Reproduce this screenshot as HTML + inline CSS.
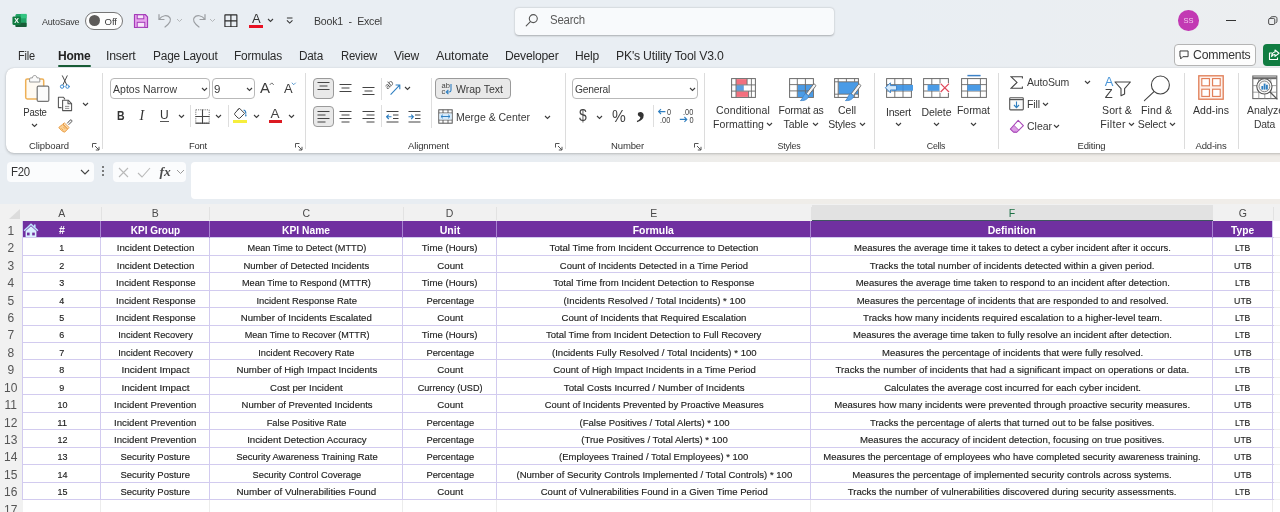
<!DOCTYPE html>
<html lang="en">
<head>
<meta charset="utf-8">
<title>Book1 - Excel</title>
<style>
*{box-sizing:border-box}
html,body{margin:0;padding:0}
body{width:1280px;height:512px;overflow:hidden;position:relative;background:#e9eef3;font-family:"Liberation Sans",sans-serif;color:#3b3b3b;font-size:12px}
.abs,#sheet div,#sheet svg,#chrome div,#chrome svg,#chrome span{position:absolute}
#chrome span.i{position:static}
#chrome{will-change:transform;position:absolute;left:0;top:0;width:1280px;height:204px;background:linear-gradient(90deg,#e9eef3 0%,#e9eef3 70%,#eceef0 100%)}
.t{white-space:nowrap;line-height:14px;height:14px;color:#3a3a3a}
.tab{font-size:12.5px;top:49px;color:#2b2b2b;line-height:15px;white-space:nowrap}
.gl{font-size:9.5px;color:#333;top:140px;line-height:12px;white-space:nowrap;transform:translateX(-50%)}
.lbl{font-size:10.5px;color:#333;line-height:14px;white-space:nowrap;transform:translateX(-50%)}
.sep{width:1px;background:#dcdcdc;top:73px;height:76px}
.msep{width:1px;background:#dedede;height:22px}
.box{border:1px solid #b9b9b9;border-radius:4px;background:#fff}
.hbtn{border:1px solid #9a9a9a;border-radius:4px;background:#e9e9e9}
#ribbon{left:6px;top:68px;width:1290px;height:85px;background:#fff;border-radius:8px;box-shadow:0 1px 3px rgba(0,0,0,.22),0 0 1px rgba(0,0,0,.15)}
/* sheet */
#sheet{will-change:transform;position:absolute;left:0;top:204px;width:1280px;height:308px;background:linear-gradient(90deg,#e8edf2 0%,#e8edf2 42%,#efede9 58%,#f0ede9 100%);overflow:hidden}
#sheet>div,#sheet>svg{margin-top:-204px}
.chbg{left:0;top:204.4px;width:1280px;height:17px;background:#f1f1f1}
.rhbg{left:0;top:204.4px;width:22.5px;height:308px;background:#f1f1f1}
.corner{left:9px;top:209px;width:0;height:0;border-left:11px solid transparent;border-bottom:10px solid #dcdcdc}
.selcol{top:204.5px;height:16.6px;background:#e2e2e2;border-bottom:1.8px solid #3f5560}
.cl{width:40px;text-align:center;top:206px;font-size:10.5px;line-height:14px;color:#4a4a4a}
.cl.sel{color:#1f7145}
.chsep{top:207px;width:1px;height:13px;background:#e2e2e2}
.rn{left:0;width:21.5px;text-align:center;font-size:12px;line-height:21.4px;color:#555;height:17.4px;overflow:visible}
.cells{left:22.5px;top:221px;width:1260px;height:300px;background:#fff}
.gv{width:1px;background:#ececec}
.gh{height:1px;background:#efefef}
.ph{background:#7030a0}
.hc{height:17.4px;line-height:19.2px;text-align:center;color:#fff;font-weight:bold;font-size:10.3px;letter-spacing:0px;white-space:nowrap}
.home{}
.c{height:17.4px;line-height:20.2px;text-align:center;padding-left:.8px;font-size:9.9px;color:#1c1c1c;-webkit-text-stroke:0.15px #1c1c1c;white-space:nowrap;overflow:visible}
.ca{font-size:9.9px!important}
.cs{display:inline-block;position:static!important}
.lh{left:22px;width:1251.5px;height:1px;background:#d2cbef}
.lv{top:221px;width:1px;height:278px;background:#d2cbef}
.lvh{top:221.1px;width:1px;height:17.1px;background:#a883d2}
</style>
</head>
<body>
<div id="chrome">
<!-- ===== title bar ===== -->
<svg style="left:12.3px;top:13.2px" width="15" height="15" viewBox="0 0 17 17"><rect x="4" y="1" width="12.5" height="15" rx="1.5" fill="#21a366"/><rect x="10" y="1" width="6.5" height="5" fill="#33c481"/><rect x="4" y="6" width="6" height="5" fill="#107c41"/><rect x="4" y="11" width="12.5" height="5" rx="1" fill="#185c37"/><rect x="0.5" y="4" width="9.5" height="9.5" rx="1.2" fill="#107c41"/><text x="5.25" y="11.6" font-family="Liberation Sans,sans-serif" font-size="8" font-weight="bold" fill="#fff" text-anchor="middle">X</text></svg>
<div class="t" style="left:42px;top:14.6px;font-size:9.6px;letter-spacing:-0.22px;transform:scaleX(0.9385);transform-origin:0 50%">AutoSave</div>
<div style="left:85px;top:11.5px;width:37.5px;height:18px;border:1px solid #767676;border-radius:9px;background:#fdfdfd"></div>
<div style="left:88.5px;top:15px;width:11px;height:11px;border-radius:50%;background:#5d5b59"></div>
<div class="t" style="left:104.5px;top:14.6px;font-size:9.6px;letter-spacing:-0.075px">Off</div>
<!-- save -->
<svg style="left:133px;top:12.5px" width="16" height="16" viewBox="0 0 16 16"><path d="M1.5 1.5 H12.2 L14.5 3.8 V14.5 H1.5 Z" fill="#e8a6ee" stroke="#a33bb8" stroke-width="1.2" stroke-linejoin="round"/><rect x="4.2" y="1.8" width="6.6" height="4" fill="#f7e6f9" stroke="#a33bb8" stroke-width="1"/><rect x="4.2" y="9.3" width="7.6" height="5" fill="#f7e6f9" stroke="#a33bb8" stroke-width="1"/></svg>
<!-- undo -->
<svg style="left:157px;top:12px" width="17" height="17" viewBox="0 0 17 17" fill="none" stroke="#9b9ea2" stroke-width="1.2" stroke-linecap="round" stroke-linejoin="round"><path d="M2 2.5 V7.5 H7"/><path d="M2.3 7.2 C5 3.2 10.5 2.6 12.8 5.6 C15 8.6 12.5 11.5 8 15"/></svg>
<svg style="left:176px;top:18px" width="7" height="5" viewBox="0 0 7 5" fill="none" stroke="#b5b8bb" stroke-width="1"><path d="M1 1 L3.5 3.5 L6 1"/></svg>
<!-- redo -->
<svg style="left:190px;top:12px" width="17" height="17" viewBox="0 0 17 17" fill="none" stroke="#9b9ea2" stroke-width="1.2" stroke-linecap="round" stroke-linejoin="round"><path d="M15 2.5 V7.5 H10"/><path d="M14.7 7.2 C12 3.2 6.5 2.6 4.2 5.6 C2 8.6 4.5 11.5 9 15"/></svg>
<svg style="left:209px;top:18px" width="7" height="5" viewBox="0 0 7 5" fill="none" stroke="#b5b8bb" stroke-width="1"><path d="M1 1 L3.5 3.5 L6 1"/></svg>
<!-- borders -->
<svg style="left:224.4px;top:13.7px" width="13.8" height="13.8" viewBox="0 0 15 15" fill="none" stroke="#2b2b2b" stroke-width="1.25"><rect x="1" y="1" width="13" height="13" rx="0.3"/><path d="M7.5 1 V14 M1 7.5 H14"/></svg>
<!-- font color A -->
<div class="t" style="left:251.9px;top:10.6px;font-size:13px;line-height:16px;height:16px;color:#333">A</div>
<div style="left:249px;top:24.5px;width:14px;height:3.5px;background:#e81123"></div>
<svg style="left:267px;top:18px" width="7" height="5" viewBox="0 0 7 5" fill="none" stroke="#3d3d3d" stroke-width="1.1"><path d="M1 1 L3.5 3.5 L6 1"/></svg>
<!-- overflow -->
<svg style="left:285.5px;top:17.2px" width="7.4" height="7.4" viewBox="0 0 8 8" fill="none" stroke="#333" stroke-width="1.1"><path d="M1 1 H7 M1 3.6 L4 6.6 L7 3.6"/></svg>
<div class="t" style="left:314px;top:13.9px;font-size:10.8px;letter-spacing:-0.22px;transform:scaleX(0.9809);transform-origin:0 50%">Book1&nbsp; -&nbsp; Excel</div>
<!-- search -->
<div style="left:515px;top:7.5px;width:319px;height:27px;background:#f8fafc;border-radius:4px;box-shadow:0 0.5px 2px rgba(0,0,0,.28)"></div>
<svg style="left:525px;top:13px" width="14" height="14" viewBox="0 0 14 14" fill="none" stroke="#555" stroke-width="1.1" stroke-linecap="round"><circle cx="8.3" cy="5.6" r="4"/><path d="M5.4 8.6 L1.2 12.8"/></svg>
<div class="t" style="left:550px;top:13px;font-size:12px;color:#5a5a5a;letter-spacing:-0.22px;transform:scaleX(0.9534);transform-origin:0 50%">Search</div>
<!-- avatar -->
<div style="left:1178.3px;top:10.4px;width:20.6px;height:20.6px;border-radius:50%;background:#c239b3"></div>
<div class="t" style="left:1178.5px;top:15px;width:20px;text-align:center;font-size:7.5px;color:#f3c9ee;line-height:12px">SS</div>
<div style="left:1225.5px;top:19.5px;width:10px;height:1.2px;background:#333"></div>
<svg style="left:1267.5px;top:15.8px" width="11" height="9.5" viewBox="0 0 14 12" fill="none" stroke="#333" stroke-width="1.1"><rect x="0.8" y="3" width="7.8" height="7.8" rx="1.8"/><path d="M3.2 2.8 C3.4 1.4 4.2 0.8 5.4 0.8 H9 C10.6 0.8 11.4 1.6 11.4 3.2 V6.6 C11.4 7.8 10.8 8.6 9.6 8.8"/></svg>
<!-- ===== tabs ===== -->
<div class="tab" style="left:18px;letter-spacing:-0.22px;transform:scaleX(0.8819);transform-origin:0 50%">File</div>
<div class="tab" style="left:57.5px;font-weight:bold;color:#222;letter-spacing:-0.22px;transform:scaleX(0.9600);transform-origin:0 50%">Home</div>
<div style="left:58px;top:64.5px;width:33px;height:2.5px;border-radius:1px;background:#185c37"></div>
<div class="tab" style="left:106px;letter-spacing:-0.22px;transform:scaleX(0.9851);transform-origin:0 50%">Insert</div>
<div class="tab" style="left:153px;letter-spacing:-0.22px;transform:scaleX(0.9516);transform-origin:0 50%">Page Layout</div>
<div class="tab" style="left:234px;letter-spacing:-0.22px;transform:scaleX(0.9536);transform-origin:0 50%">Formulas</div>
<div class="tab" style="left:299px;letter-spacing:-0.22px;transform:scaleX(0.9402);transform-origin:0 50%">Data</div>
<div class="tab" style="left:341px;letter-spacing:-0.22px;transform:scaleX(0.9073);transform-origin:0 50%">Review</div>
<div class="tab" style="left:394px;letter-spacing:-0.22px;transform:scaleX(0.9617);transform-origin:0 50%">View</div>
<div class="tab" style="left:436px;letter-spacing:-0.127px">Automate</div>
<div class="tab" style="left:505px;letter-spacing:-0.22px;transform:scaleX(0.9726);transform-origin:0 50%">Developer</div>
<div class="tab" style="left:575px;letter-spacing:-0.22px;transform:scaleX(0.9662);transform-origin:0 50%">Help</div>
<div class="tab" style="left:616px;letter-spacing:-0.22px;transform:scaleX(0.9784);transform-origin:0 50%">PK's Utility Tool V3.0</div>
<div style="left:1174px;top:44px;width:82px;height:21.5px;background:#fdfdfd;border:1px solid #b4b4b4;border-radius:4px"></div>
<svg style="left:1178.8px;top:49.5px" width="10.5" height="10.5" viewBox="0 0 11 11" fill="none" stroke="#333" stroke-width="1"><path d="M1 1 H9.5 V7 H4 L1.8 9.3 V7 H1 Z" stroke-linejoin="round"/></svg>
<div class="tab" style="left:1193px;top:47.5px;color:#333;letter-spacing:-0.22px;transform:scaleX(0.9799);transform-origin:0 50%">Comments</div>
<div style="left:1263px;top:44px;width:30px;height:21.5px;background:#107c41;border-radius:4px"></div>
<svg style="left:1268px;top:48.5px" width="12" height="12" viewBox="0 0 12 12" fill="none" stroke="#fff" stroke-width="1.1" stroke-linejoin="round"><path d="M4 4 H1.5 V10.5 H9.5 V8.5"/><path d="M7 1 L11 4.2 L7 7.4 V5.5 C5.2 5.5 4.2 6.2 3.6 7.6 C3.7 5 5 3.2 7 3 Z"/></svg>
<!-- ===== ribbon ===== -->
<div style="left:0;top:153px;width:1280px;height:51px;background:linear-gradient(90deg,#e8edf2 0%,#e8edf2 42%,#efede9 58%,#f0ede9 100%)"></div>
<div id="ribbon"></div>
<!-- separators -->
<div class="sep" style="left:102px"></div><div class="sep" style="left:305px"></div><div class="sep" style="left:565px"></div><div class="sep" style="left:704px"></div><div class="sep" style="left:873.5px"></div><div class="sep" style="left:998px"></div><div class="sep" style="left:1184px"></div><div class="sep" style="left:1237.5px"></div>
<!-- group labels -->
<div class="gl" style="left:49px;letter-spacing:-0.075px">Clipboard</div>
<div class="gl" style="left:197.5px;letter-spacing:-0.22px;transform:translateX(-50%) scaleX(0.9925)">Font</div>
<div class="gl" style="left:428.5px;letter-spacing:-0.139px">Alignment</div>
<div class="gl" style="left:627.5px;letter-spacing:-0.133px">Number</div>
<div class="gl" style="left:788.5px;letter-spacing:-0.22px;transform:translateX(-50%) scaleX(0.9367)">Styles</div>
<div class="gl" style="left:936px;letter-spacing:-0.22px;transform:translateX(-50%) scaleX(0.9238)">Cells</div>
<div class="gl" style="left:1091.5px;letter-spacing:-0.152px">Editing</div>
<div class="gl" style="left:1211px;letter-spacing:-0.174px">Add-ins</div>
<!-- dialog launchers -->
<svg class="dl" style="left:92px;top:142.5px" width="8" height="8" viewBox="0 0 8 8" fill="none" stroke="#555" stroke-width="1"><path d="M0.5 4.5 V0.5 H4.5 M3 3 L7 7 M7 3.8 V7 H3.8"/></svg>
<svg class="dl" style="left:295px;top:142.5px" width="8" height="8" viewBox="0 0 8 8" fill="none" stroke="#555" stroke-width="1"><path d="M0.5 4.5 V0.5 H4.5 M3 3 L7 7 M7 3.8 V7 H3.8"/></svg>
<svg class="dl" style="left:555px;top:142.5px" width="8" height="8" viewBox="0 0 8 8" fill="none" stroke="#555" stroke-width="1"><path d="M0.5 4.5 V0.5 H4.5 M3 3 L7 7 M7 3.8 V7 H3.8"/></svg>
<svg class="dl" style="left:694px;top:142.5px" width="8" height="8" viewBox="0 0 8 8" fill="none" stroke="#555" stroke-width="1"><path d="M0.5 4.5 V0.5 H4.5 M3 3 L7 7 M7 3.8 V7 H3.8"/></svg>
<!-- ===== Clipboard ===== -->
<svg style="left:23px;top:74px" width="28" height="29" viewBox="0 0 28 29" fill="none"><rect x="2.7" y="4.9" width="18" height="20" rx="1.6" fill="#fffaf2" stroke="#eeb056" stroke-width="1.5"/><path d="M6.6 8 V5 C6.6 4.3 7 3.9 7.8 3.9 H9.4 C9.6 2.3 10.4 1.5 11.7 1.5 C13 1.5 13.8 2.3 14 3.9 H15.6 C16.4 3.9 16.8 4.3 16.8 5 V8 Z" fill="#fafafa" stroke="#9a9a9a" stroke-width="1" stroke-linejoin="round"/><rect x="14.2" y="12.2" width="11.6" height="15.2" rx="1.2" fill="#fbfbfb" stroke="#757575" stroke-width="1.2"/></svg>
<div class="lbl" style="left:34.5px;top:104.5px;letter-spacing:-0.22px;transform:translateX(-50%) scaleX(0.9123)">Paste</div>
<svg style="left:30.5px;top:122.5px" width="7" height="5" viewBox="0 0 7 5" fill="none" stroke="#3d3d3d" stroke-width="1.1"><path d="M1 1 L3.5 3.5 L6 1"/></svg>
<!-- scissors -->
<svg style="left:59px;top:74.5px" width="12" height="15" viewBox="0 0 12 15" fill="none" stroke-linecap="round"><path d="M3.4 0.8 L7.6 9.6 M8.2 0.8 L4 9.6" stroke="#4a4a4a" stroke-width="1"/><circle cx="3.1" cy="11.6" r="1.7" stroke="#3a8ad0" stroke-width="1"/><circle cx="8.5" cy="11.6" r="1.7" stroke="#3a8ad0" stroke-width="1"/></svg>
<!-- copy -->
<svg style="left:57px;top:96px" width="16" height="16" viewBox="0 0 16 16" fill="none" stroke="#555" stroke-width="1.05" stroke-linejoin="round"><path d="M4.6 11.6 H1.4 V1.2 H6.2 L7.6 2.6 V3.6"/><path d="M5.6 4.2 H11.2 L14.6 7.6 V14.6 H5.6 Z" fill="#fbfbfb"/><path d="M11 4.4 V7.8 H14.4"/><path d="M8 10.4 H12.2 M8 12.4 H12.2" stroke-width="0.8" stroke="#777"/></svg>
<svg style="left:81.5px;top:101.5px" width="7" height="5" viewBox="0 0 7 5" fill="none" stroke="#3d3d3d" stroke-width="1.1"><path d="M1 1 L3.5 3.5 L6 1"/></svg>
<!-- format painter -->
<svg style="left:58px;top:118.5px" width="15" height="14" viewBox="0 0 15 14" fill="none" stroke-linejoin="round"><path d="M9.2 4.4 L12 1.2 C12.6 0.6 13.6 0.8 13.8 1.6 C14 2.2 13.8 2.6 13.4 3 L10.6 5.8" stroke="#555" stroke-width="1" fill="#f4f4f4"/><path d="M6.2 3.8 L11.2 8.6 L10 9.8 L5 5 Z" fill="#fde7c6" stroke="#e8963a" stroke-width="0.9"/><path d="M4.6 5.4 L9.6 10.2 L6.6 13.2 C4.4 12.4 2.6 11 0.8 8.4 Z" fill="#fbd093" stroke="#e8963a" stroke-width="0.9"/><path d="M3.4 9.4 L5.2 11.2 M5.4 8 L7.2 9.8" stroke="#e8963a" stroke-width="0.7"/></svg>
<!-- ===== Font ===== -->
<div class="box" style="left:110px;top:78px;width:99.5px;height:20.5px"></div>
<div class="t" style="left:113px;top:81.5px;font-size:10.5px;letter-spacing:0.033px">Aptos Narrow</div>
<svg style="left:201px;top:86.5px" width="7" height="5" viewBox="0 0 7 5" fill="none" stroke="#3d3d3d" stroke-width="1.1"><path d="M1 1 L3.5 3.5 L6 1"/></svg>
<div class="box" style="left:211.5px;top:78px;width:43.5px;height:20.5px"></div>
<div class="t" style="left:214px;top:81.5px;font-size:11.5px">9</div>
<svg style="left:245.5px;top:86.5px" width="7" height="5" viewBox="0 0 7 5" fill="none" stroke="#3d3d3d" stroke-width="1.1"><path d="M1 1 L3.5 3.5 L6 1"/></svg>
<div class="t" style="left:260px;top:80px;font-size:15px;line-height:16px;height:16px;color:#3a3a3a;letter-spacing:-0.216px">A</div>
<svg style="left:268.8px;top:82px" width="5.5" height="3.6" viewBox="0 0 6 4" fill="none" stroke="#444" stroke-width="0.9"><path d="M0.8 3.2 L3 1 L5.2 3.2"/></svg>
<div class="t" style="left:284px;top:81px;font-size:13.2px;line-height:16px;height:16px;color:#3a3a3a;letter-spacing:-0.22px;transform:scaleX(0.9794);transform-origin:0 50%">A</div>
<svg style="left:291.3px;top:82px" width="5.5" height="3.6" viewBox="0 0 6 4" fill="none" stroke="#2f7fc1" stroke-width="0.9"><path d="M0.8 0.8 L3 3 L5.2 0.8"/></svg>
<!-- row 2 -->
<div class="t" style="left:117px;top:108.5px;font-size:12px;font-weight:bold;color:#333;letter-spacing:-0.22px;transform:scaleX(0.8755);transform-origin:0 50%">B</div>
<div class="t" style="left:139.5px;top:109px;font-size:14px;font-style:italic;font-family:'Liberation Serif',serif;color:#333">I</div>
<div class="t" style="left:160px;top:108px;font-size:12px;color:#333">U</div>
<div style="left:160px;top:121px;width:8.5px;height:1px;background:#555"></div>
<svg style="left:177.5px;top:114px" width="7" height="5" viewBox="0 0 7 5" fill="none" stroke="#3d3d3d" stroke-width="1.1"><path d="M1 1 L3.5 3.5 L6 1"/></svg>
<div class="msep" style="left:190px;top:105px"></div>
<svg style="left:194.5px;top:108.5px" width="15" height="15" viewBox="0 0 15 15" fill="none" stroke="#7a7a7a" stroke-width="1"><rect x="0.8" y="0.8" width="13.4" height="13.4" stroke-dasharray="1.2 1"/><path d="M7.5 0.5 V14.5 M0.5 7.5 H14.5" stroke="#444" stroke-width="1.1"/><path d="M0.5 14.2 H14.5" stroke="#444" stroke-width="1.2"/></svg>
<svg style="left:214.5px;top:114px" width="7" height="5" viewBox="0 0 7 5" fill="none" stroke="#3d3d3d" stroke-width="1.1"><path d="M1 1 L3.5 3.5 L6 1"/></svg>
<div class="msep" style="left:227.5px;top:105px"></div>
<!-- fill bucket -->
<svg style="left:233px;top:106.5px" width="15" height="13" viewBox="0 0 15 13" fill="none" stroke-linejoin="round"><path d="M6.4 1.2 L11.6 6.4 L7 11 C6.4 11.6 5.6 11.6 5 11 L2 8 C1.4 7.4 1.4 6.6 2 6 Z" stroke="#444" stroke-width="1" fill="#fdfdfd"/><path d="M4.4 3.2 L6.4 1.2" stroke="#444" stroke-width="1"/><path d="M10.6 3 C12.2 3.4 13 4.8 12.8 6.6" stroke="#2f7fc1" stroke-width="1.1"/><path d="M12.8 6.8 C13.8 8.4 13.8 9.6 12.8 9.6 C11.8 9.6 11.8 8.4 12.8 6.8Z" fill="#2f7fc1"/></svg>
<div style="left:233.2px;top:119.8px;width:13.4px;height:3px;background:#f6ee3c"></div>
<svg style="left:252.5px;top:114px" width="7" height="5" viewBox="0 0 7 5" fill="none" stroke="#3d3d3d" stroke-width="1.1"><path d="M1 1 L3.5 3.5 L6 1"/></svg>
<div class="t" style="left:270.5px;top:105.5px;font-size:13.5px;line-height:15px;height:15px;color:#444">A</div>
<div style="left:268.7px;top:119.8px;width:13.6px;height:3px;background:#dc1a22"></div>
<svg style="left:287.5px;top:114px" width="7" height="5" viewBox="0 0 7 5" fill="none" stroke="#3d3d3d" stroke-width="1.1"><path d="M1 1 L3.5 3.5 L6 1"/></svg>
<!-- ===== Alignment ===== -->
<div class="hbtn" style="left:313px;top:78px;width:21px;height:20.5px"></div>
<svg style="left:317px;top:81px" width="13" height="13" viewBox="0 0 13 13" stroke="#444" stroke-width="1.1"><path d="M0.5 1.5 H12.5 M2.5 5 H10.5 M0.5 8.5 H12.5" transform="translate(0,0)"/></svg>
<svg style="left:339px;top:82px" width="13" height="13" viewBox="0 0 13 13" stroke="#444" stroke-width="1.1"><path d="M0.5 2.5 H12.5 M2.5 6 H10.5 M0.5 9.5 H12.5"/></svg>
<svg style="left:361.5px;top:84px" width="13" height="13" viewBox="0 0 13 13" stroke="#444" stroke-width="1.1"><path d="M0.5 3.5 H12.5 M2.5 7 H10.5 M0.5 10.5 H12.5"/></svg>
<div class="msep" style="left:380.5px;top:78px"></div>
<!-- orientation -->
<svg style="left:384.5px;top:80px" width="16" height="16" viewBox="0 0 16 16" fill="none"><path d="M5.6 14.6 L14.4 5.4 M10.6 5 H14.8 V9.2" stroke="#2f7fc1" stroke-width="1.1"/><text x="0" y="0" transform="translate(2.4,9.4) rotate(-42)" font-family="Liberation Sans,sans-serif" font-size="8" fill="#444">ab</text></svg>
<svg style="left:403.5px;top:86px" width="7" height="5" viewBox="0 0 7 5" fill="none" stroke="#3d3d3d" stroke-width="1.1"><path d="M1 1 L3.5 3.5 L6 1"/></svg>
<div class="msep" style="left:430.5px;top:78px;height:50px"></div>
<div class="hbtn" style="left:435px;top:78px;width:76px;height:20.5px"></div>
<svg style="left:440px;top:80.5px" width="14" height="15" viewBox="0 0 14 15" fill="none"><text x="1.5" y="6.5" font-family="Liberation Sans,sans-serif" font-size="7.5" fill="#444">ab</text><text x="1.5" y="13" font-family="Liberation Sans,sans-serif" font-size="7.5" fill="#444">c</text><path d="M11 3 V9.2 C11 10.6 10 11 9 11 H6.4 M8.4 8.8 L6.2 11 L8.4 13.2" stroke="#2f7fc1" stroke-width="1.1"/></svg>
<div class="t" style="left:456px;top:81.5px;font-size:10.5px;letter-spacing:0.012px">Wrap Text</div>
<!-- row 2 -->
<div class="hbtn" style="left:313px;top:106px;width:21px;height:20.5px"></div>
<svg style="left:317px;top:110px" width="13" height="13" viewBox="0 0 13 13" stroke="#444" stroke-width="1.1"><path d="M0.5 1.5 H12.5 M0.5 5 H8.5 M0.5 8.5 H12.5 M0.5 12 H8.5"/></svg>
<svg style="left:339px;top:110px" width="13" height="13" viewBox="0 0 13 13" stroke="#444" stroke-width="1.1"><path d="M0.5 1.5 H12.5 M2.5 5 H10.5 M0.5 8.5 H12.5 M2.5 12 H10.5"/></svg>
<svg style="left:361.5px;top:110px" width="13" height="13" viewBox="0 0 13 13" stroke="#444" stroke-width="1.1"><path d="M0.5 1.5 H12.5 M4.5 5 H12.5 M0.5 8.5 H12.5 M4.5 12 H12.5"/></svg>
<div class="msep" style="left:380.5px;top:105px"></div>
<svg style="left:385.5px;top:110px" width="13" height="13" viewBox="0 0 13 13" fill="none" stroke="#444" stroke-width="1.1"><path d="M0.5 1.5 H12.5 M7 5 H12.5 M7 8.5 H12.5 M0.5 12 H12.5"/><path d="M5.5 6.8 H0.8 M2.8 4.6 L0.6 6.8 L2.8 9" stroke="#2f7fc1"/></svg>
<svg style="left:408px;top:110px" width="13" height="13" viewBox="0 0 13 13" fill="none" stroke="#444" stroke-width="1.1"><path d="M0.5 1.5 H12.5 M7 5 H12.5 M7 8.5 H12.5 M0.5 12 H12.5"/><path d="M0.5 6.8 H5.2 M3.2 4.6 L5.4 6.8 L3.2 9" stroke="#2f7fc1"/></svg>
<!-- merge -->
<svg style="left:438px;top:108.5px" width="15" height="15" viewBox="0 0 15 15" fill="none"><rect x="0.8" y="0.8" width="13.4" height="13.4" stroke="#555" stroke-width="1"/><path d="M0.8 4 H14.2 M0.8 11 H14.2 M5 0.8 V4 M10 0.8 V4 M5 11 V14.2 M10 11 V14.2" stroke="#555" stroke-width="0.9"/><rect x="1.3" y="4.5" width="12.4" height="6" fill="#d6ebfb"/><path d="M3 7.5 H12 M4.8 5.8 L3 7.5 L4.8 9.2 M10.2 5.8 L12 7.5 L10.2 9.2" stroke="#2f7fc1" stroke-width="1"/></svg>
<div class="t" style="left:456px;top:109.5px;font-size:10.5px;letter-spacing:-0.009px">Merge &amp; Center</div>
<svg style="left:544px;top:114.5px" width="7" height="5" viewBox="0 0 7 5" fill="none" stroke="#3d3d3d" stroke-width="1.1"><path d="M1 1 L3.5 3.5 L6 1"/></svg>
<!-- ===== Number ===== -->
<div class="box" style="left:572px;top:78px;width:125.5px;height:20.5px"></div>
<div class="t" style="left:575px;top:81.5px;font-size:10.5px;letter-spacing:-0.22px;transform:scaleX(0.9771);transform-origin:0 50%">General</div>
<svg style="left:688.5px;top:86.5px" width="7" height="5" viewBox="0 0 7 5" fill="none" stroke="#3d3d3d" stroke-width="1.1"><path d="M1 1 L3.5 3.5 L6 1"/></svg>
<div class="t" style="left:578.8px;top:106.5px;font-size:17px;line-height:18px;height:18px;color:#444;letter-spacing:-0.22px;transform:scaleX(0.8217);transform-origin:0 50%">$</div>
<svg style="left:595.5px;top:114.5px" width="7" height="5" viewBox="0 0 7 5" fill="none" stroke="#3d3d3d" stroke-width="1.1"><path d="M1 1 L3.5 3.5 L6 1"/></svg>
<div class="t" style="left:611.5px;top:106.8px;font-size:16.5px;line-height:18px;height:18px;color:#444;letter-spacing:-0.22px;transform:scaleX(0.9411);transform-origin:0 50%">%</div>
<div class="t" style="left:636.5px;top:91px;font-size:34px;line-height:30px;height:30px;color:#333;font-family:'Liberation Serif',serif;font-weight:bold">,</div>
<div class="msep" style="left:652.5px;top:105px"></div>
<!-- decimals -->
<svg style="left:657px;top:106.7px" width="16" height="17" viewBox="0 0 16 17" fill="none"><path d="M8.4 4.6 H1.6 M4 2.2 L1.6 4.6 L4 7" stroke="#2f7fc1" stroke-width="1.1"/><text x="10" y="7.6" font-family="Liberation Sans,sans-serif" font-size="9" fill="#444" transform="translate(10,0) scale(.82,1) translate(-10,0)">0</text><text x="3" y="15.8" font-family="Liberation Sans,sans-serif" font-size="9" fill="#444" transform="translate(3,0) scale(.82,1) translate(-3,0)">.00</text></svg>
<svg style="left:679px;top:106.7px" width="16" height="17" viewBox="0 0 16 17" fill="none"><text x="4" y="7.6" font-family="Liberation Sans,sans-serif" font-size="9" fill="#444" transform="translate(4,0) scale(.82,1) translate(-4,0)">.00</text><path d="M0.8 12.4 H7.8 M5.4 10 L7.8 12.4 L5.4 14.8" stroke="#2f7fc1" stroke-width="1.1"/><text x="10.4" y="15.8" font-family="Liberation Sans,sans-serif" font-size="9" fill="#444" transform="translate(10.4,0) scale(.82,1) translate(-10.4,0)">0</text></svg>
<!-- ===== Styles ===== -->
<svg style="left:731px;top:77.5px" width="25" height="20" viewBox="0 0 25 20" fill="none"><rect x="0.6" y="0.6" width="23.8" height="18.8" fill="#fff" stroke="#6a6a6a" stroke-width="1"/><rect x="5.1" y="1.1" width="10.9" height="5.5" fill="#f2707f"/><rect x="5.1" y="7.2" width="7.7" height="5.6" fill="#5b9fe0"/><rect x="5.1" y="13.4" width="12.4" height="5.5" fill="#f2707f"/><path d="M0.6 6.9 H24.4 M0.6 13.1 H24.4 M5 0.6 V19.4 M20.4 0.6 V19.4 M16.1 0.6 V6.9 M17.6 13.1 V19.4" stroke="#6a6a6a" stroke-width="0.9"/></svg>
<div class="lbl" style="left:743px;top:102.7px;letter-spacing:0.132px">Conditional</div>
<div class="lbl" style="left:738.5px;top:116.7px;letter-spacing:0.081px">Formatting</div>
<svg style="left:766px;top:121.7px" width="7" height="5" viewBox="0 0 7 5" fill="none" stroke="#3d3d3d" stroke-width="1.1"><path d="M1 1 L3.5 3.5 L6 1"/></svg>
<!-- format as table -->
<svg style="left:788.5px;top:77.5px" width="28" height="24" viewBox="0 0 28 24" fill="none"><rect x="0.6" y="0.6" width="23.8" height="18.8" fill="#fff" stroke="#6a6a6a" stroke-width="1"/><rect x="8.6" y="7" width="15.4" height="12" fill="#4a9be6"/><path d="M0.6 6.6 H24.4 M0.6 12.9 H24.4 M8.3 0.6 V19.4 M16.4 0.6 V19.4" stroke="#6a6a6a" stroke-width="0.9"/><path d="M25.6 6.2 C26.6 6.6 27 7.4 26.6 8.2 L19.4 17.6 L17 16 L24 6.8 C24.4 6.2 25 6 25.6 6.2Z" fill="#f4f4f4" stroke="#6a6a6a" stroke-width="0.9"/><path d="M16.6 15.6 L19.6 17.8 C19.4 20.4 17 22.8 11.4 22.6 C14 21 13.4 17.6 16.6 15.6Z" fill="#5aa7ee" stroke="#3c82c8" stroke-width="0.8"/></svg>
<div class="lbl" style="left:801px;top:102.7px;letter-spacing:-0.22px;transform:translateX(-50%) scaleX(0.9937)">Format as</div>
<div class="lbl" style="left:796px;top:116.7px;letter-spacing:-0.022px">Table</div>
<svg style="left:811.5px;top:121.7px" width="7" height="5" viewBox="0 0 7 5" fill="none" stroke="#3d3d3d" stroke-width="1.1"><path d="M1 1 L3.5 3.5 L6 1"/></svg>
<!-- cell styles -->
<svg style="left:833.5px;top:77.5px" width="28" height="24" viewBox="0 0 28 24" fill="none"><rect x="0.6" y="0.6" width="23.8" height="18.8" fill="#fff" stroke="#6a6a6a" stroke-width="1"/><rect x="4.4" y="4" width="19.6" height="12" fill="#4a9be6"/><path d="M0.6 3.8 H24.4 M0.6 16.2 H24.4 M4.2 0.6 V19.4 M20.6 0.6 V3.8 M20.6 16.2 V19.4 M12.4 0.6 V3.8" stroke="#6a6a6a" stroke-width="0.9"/><path d="M25.6 6.2 C26.6 6.6 27 7.4 26.6 8.2 L19.4 17.6 L17 16 L24 6.8 C24.4 6.2 25 6 25.6 6.2Z" fill="#f4f4f4" stroke="#6a6a6a" stroke-width="0.9"/><path d="M16.6 15.6 L19.6 17.8 C19.4 20.4 17 22.8 11.4 22.6 C14 21 13.4 17.6 16.6 15.6Z" fill="#5aa7ee" stroke="#3c82c8" stroke-width="0.8"/></svg>
<div class="lbl" style="left:847px;top:102.7px;letter-spacing:-0.023px">Cell</div>
<div class="lbl" style="left:842px;top:116.7px;letter-spacing:-0.182px">Styles</div>
<svg style="left:858.5px;top:121.7px" width="7" height="5" viewBox="0 0 7 5" fill="none" stroke="#3d3d3d" stroke-width="1.1"><path d="M1 1 L3.5 3.5 L6 1"/></svg>
<!-- ===== Cells ===== -->
<svg style="left:884px;top:77.5px" width="30" height="20" viewBox="0 0 30 20" fill="none"><rect x="2.6" y="0.6" width="24.8" height="18.8" fill="#fff" stroke="#6a6a6a" stroke-width="1"/><path d="M2.6 6.6 H27.4 M2.6 13 H27.4 M10.8 0.6 V19.4 M19 0.6 V19.4" stroke="#6a6a6a" stroke-width="0.9"/><rect x="8" y="6.9" width="21" height="5.8" fill="#4a9be6"/><path d="M19 6.9 V12.7 M10.8 6.9 V12.7" stroke="#3c82c8" stroke-width="0.7"/><path d="M6.4 4.8 L1.4 9.8 L6.4 14.8 V12 H12.6 V7.6 H6.4 Z" fill="#d6eafb" stroke="#3c82c8" stroke-width="1" stroke-linejoin="round"/></svg>
<div class="lbl" style="left:898.5px;top:104.5px;letter-spacing:-0.211px">Insert</div>
<svg style="left:894.5px;top:121.7px" width="7" height="5" viewBox="0 0 7 5" fill="none" stroke="#3d3d3d" stroke-width="1.1"><path d="M1 1 L3.5 3.5 L6 1"/></svg>
<svg style="left:923px;top:77.5px" width="28" height="20" viewBox="0 0 28 20" fill="none"><rect x="0.6" y="0.6" width="24.8" height="18.8" fill="#fff" stroke="#6a6a6a" stroke-width="1"/><path d="M0.6 6.6 H25.4 M0.6 13 H25.4 M8.8 0.6 V19.4 M17 0.6 V19.4" stroke="#6a6a6a" stroke-width="0.9"/><rect x="4.6" y="6.8" width="12" height="6" fill="#4a9be6"/><rect x="16.6" y="5" width="10" height="10" fill="#fff"/><path d="M17.6 5.6 L26 14 M26 5.6 L17.6 14" stroke="#e0475a" stroke-width="1.2"/></svg>
<div class="lbl" style="left:936.5px;top:104.5px;letter-spacing:-0.060px">Delete</div>
<svg style="left:932.5px;top:121.7px" width="7" height="5" viewBox="0 0 7 5" fill="none" stroke="#3d3d3d" stroke-width="1.1"><path d="M1 1 L3.5 3.5 L6 1"/></svg>
<svg style="left:961px;top:73.5px" width="26" height="24" viewBox="0 0 26 24" fill="none"><path d="M6.4 1.6 H19.6" stroke="#3c82c8" stroke-width="1.5"/><rect x="0.6" y="4.6" width="24.8" height="18.8" fill="#fff" stroke="#6a6a6a" stroke-width="1"/><path d="M0.6 10.6 H25.4 M0.6 17 H25.4 M6.6 4.6 V23.4 M19.4 4.6 V23.4" stroke="#6a6a6a" stroke-width="0.9"/><rect x="6.4" y="10.8" width="13" height="6" fill="#4a9be6"/></svg>
<div class="lbl" style="left:973.5px;top:102.7px;letter-spacing:-0.044px">Format</div>
<svg style="left:970px;top:121.5px" width="7" height="5" viewBox="0 0 7 5" fill="none" stroke="#3d3d3d" stroke-width="1.1"><path d="M1 1 L3.5 3.5 L6 1"/></svg>
<!-- ===== Editing ===== -->
<svg style="left:1009.5px;top:76px" width="14" height="13" viewBox="0 0 14 13" fill="none" stroke="#444" stroke-width="1.1" stroke-linejoin="miter"><path d="M12.4 2.6 V0.8 H1.2 L7 6.4 L1.2 12.2 H12.4 V10.4"/></svg>
<div class="t" style="left:1027px;top:75px;font-size:10.5px;letter-spacing:-0.172px">AutoSum</div>
<svg style="left:1083.5px;top:79.5px" width="7" height="5" viewBox="0 0 7 5" fill="none" stroke="#3d3d3d" stroke-width="1.1"><path d="M1 1 L3.5 3.5 L6 1"/></svg>
<svg style="left:1009px;top:97px" width="15" height="14" viewBox="0 0 15 14" fill="none"><rect x="0.7" y="0.7" width="13.6" height="12.2" rx="0.8" stroke="#555" stroke-width="1.1" fill="#fafafa"/><path d="M0.7 2.6 H14.3" stroke="#555" stroke-width="1.2"/><path d="M7.5 4.6 V10.4 M5 8 L7.5 10.6 L10 8" stroke="#2f7fc1" stroke-width="1.1"/></svg>
<div class="t" style="left:1027px;top:97px;font-size:10.5px;letter-spacing:-0.105px">Fill</div>
<svg style="left:1042px;top:102px" width="7" height="5" viewBox="0 0 7 5" fill="none" stroke="#3d3d3d" stroke-width="1.1"><path d="M1 1 L3.5 3.5 L6 1"/></svg>
<svg style="left:1008.5px;top:118.5px" width="16" height="15" viewBox="0 0 16 15" fill="none" stroke-linejoin="round"><path d="M9.2 1.4 L14.4 6.6 L7.8 13.2 H4.6 L1.4 10 Z" fill="#fff" stroke="#a848b8" stroke-width="1.1"/><path d="M1.6 10 L5 6.4 L9.8 11.2 L7.8 13 H4.6Z" fill="#dd9be6" stroke="#a848b8" stroke-width="0.9"/></svg>
<div class="t" style="left:1027px;top:119px;font-size:10.5px;letter-spacing:-0.019px">Clear</div>
<svg style="left:1053px;top:124px" width="7" height="5" viewBox="0 0 7 5" fill="none" stroke="#3d3d3d" stroke-width="1.1"><path d="M1 1 L3.5 3.5 L6 1"/></svg>
<!-- sort & filter -->
<svg style="left:1103.5px;top:75.5px" width="28" height="24" viewBox="0 0 28 24" fill="none"><text x="0.8" y="10.2" font-family="Liberation Sans,sans-serif" font-size="13" fill="#4a96d8">A</text><text x="0.8" y="22.2" font-family="Liberation Sans,sans-serif" font-size="13" fill="#444">Z</text><path d="M11 6 H26.4 L20.6 12.6 V18 L17 19.8 V12.6 Z" stroke="#444" stroke-width="1.1" stroke-linejoin="round"/></svg>
<div class="lbl" style="left:1117px;top:102.7px;letter-spacing:0.135px">Sort &amp;</div>
<div class="lbl" style="left:1112.5px;top:116.7px;letter-spacing:0.30px;transform:translateX(-50%) scaleX(1.0142)">Filter</div>
<svg style="left:1127.5px;top:121.7px" width="7" height="5" viewBox="0 0 7 5" fill="none" stroke="#3d3d3d" stroke-width="1.1"><path d="M1 1 L3.5 3.5 L6 1"/></svg>
<!-- find & select -->
<svg style="left:1143px;top:74.5px" width="28" height="27" viewBox="0 0 28 27" fill="none" stroke="#444" stroke-width="1.1" stroke-linecap="round"><circle cx="17.4" cy="10" r="9"/><path d="M11 16.6 L1.4 25.6"/></svg>
<div class="lbl" style="left:1156.5px;top:102.7px;letter-spacing:0.107px">Find &amp;</div>
<div class="lbl" style="left:1152px;top:116.7px;letter-spacing:-0.115px">Select</div>
<svg style="left:1168.5px;top:121.7px" width="7" height="5" viewBox="0 0 7 5" fill="none" stroke="#3d3d3d" stroke-width="1.1"><path d="M1 1 L3.5 3.5 L6 1"/></svg>
<!-- ===== Add-ins ===== -->
<svg style="left:1198px;top:75px" width="26" height="25" viewBox="0 0 26 25" fill="none" stroke="#e07b53"><rect x="0.8" y="0.8" width="24.4" height="23.4" stroke-width="1.3" fill="#fdf1ec"/><rect x="3.8" y="3.6" width="7.6" height="7.2" stroke-width="1.1" fill="#fff"/><rect x="14.6" y="3.6" width="7.6" height="7.2" stroke-width="1.1" fill="#fff"/><rect x="3.8" y="14.2" width="7.6" height="7.2" stroke-width="1.1" fill="#fff"/><rect x="14.6" y="14.2" width="7.6" height="7.2" stroke-width="1.1" fill="#fff"/></svg>
<div class="lbl" style="left:1211px;top:102.7px;letter-spacing:0.056px">Add-ins</div>
<!-- analyze data -->
<svg style="left:1251.5px;top:74.5px" width="28" height="26" viewBox="0 0 28 26" fill="none"><rect x="0.8" y="1" width="24" height="22.6" stroke="#6a6a6a" stroke-width="1.1" fill="#fff"/><path d="M0.8 3.2 H24.8" stroke="#6a6a6a" stroke-width="2"/><path d="M0.8 10.6 H24.8 M0.8 17.2 H24.8 M6.8 3.4 V23.6 M12.8 3.4 V23.6 M18.8 3.4 V23.6" stroke="#8a8a8a" stroke-width="0.8"/><circle cx="12.4" cy="11.4" r="7.6" fill="#fff" stroke="#555" stroke-width="1.1"/><circle cx="12.4" cy="11.4" r="5.4" fill="#f6f6f6" stroke="#666" stroke-width="0.8"/><rect x="9.4" y="11" width="1.8" height="3.6" fill="#2f7fc1"/><rect x="11.7" y="8.6" width="1.8" height="6" fill="#2f7fc1"/><rect x="14" y="9.8" width="1.8" height="4.8" fill="#2f7fc1"/><path d="M18 17 L25.4 24.4" stroke="#555" stroke-width="1.3"/></svg>
<div class="t" style="left:1247px;top:102.7px;font-size:10.5px;letter-spacing:-0.051px">Analyze</div>
<div class="t" style="left:1254px;top:116.7px;font-size:10.5px;letter-spacing:-0.22px;transform:scaleX(0.9856);transform-origin:0 50%">Data</div>

<!-- ===== formula bar ===== -->
<div style="left:7px;top:162px;width:87px;height:19.5px;background:#fbfcfd;border-radius:4px"></div>
<div class="t" style="left:11px;top:164.5px;font-size:12px;color:#333;letter-spacing:-0.22px;transform:scaleX(0.9487);transform-origin:0 50%">F20</div>
<svg style="left:79.5px;top:169px" width="10" height="6" viewBox="0 0 10 6" fill="none" stroke="#444" stroke-width="1.1"><path d="M1 1 L5 5 L9 1"/></svg>
<div style="left:102px;top:166px;width:2px;height:2px;background:#555;border-radius:1px;box-shadow:0 4px 0 #555,0 8px 0 #555"></div>
<div style="left:113px;top:162px;width:73px;height:19.5px;background:#fbfcfd;border-radius:4px"></div>
<svg style="left:117.5px;top:166.5px" width="11" height="11" viewBox="0 0 11 11" fill="none" stroke="#b9b9b9" stroke-width="1.1"><path d="M1 1 L10 10 M10 1 L1 10"/></svg>
<svg style="left:137px;top:166.5px" width="14" height="11" viewBox="0 0 14 11" fill="none" stroke="#b9b9b9" stroke-width="1.1"><path d="M1 6 L5 10 L13 1"/></svg>
<div class="t" style="left:159.5px;top:164px;font-family:'Liberation Serif',serif;font-style:italic;font-weight:bold;font-size:13.5px;line-height:16px;height:16px;color:#4d4d4d">fx</div>
<svg style="left:175.5px;top:169px" width="9" height="6" viewBox="0 0 9 6" fill="none" stroke="#9a9a9a" stroke-width="1"><path d="M1 1 L4.5 4.5 L8 1"/></svg>
<div style="left:191px;top:162px;width:1100px;height:36.5px;background:#fff;border-radius:4px"></div>
</div>
<div id="sheet">
<div class="chbg"></div>
<div class="rhbg"></div>
<div class="corner"></div>
<div class="selcol" style="left:811.75px;width:400.75px"></div>
<div class="cl" style="left:41.75px">A</div>
<div class="cl" style="left:135.25px">B</div>
<div class="cl" style="left:286.25px">C</div>
<div class="cl" style="left:429.62px">D</div>
<div class="cl" style="left:633.75px">E</div>
<div class="cl sel" style="left:991.88px">F</div>
<div class="cl" style="left:1222.75px">G</div>
<div class="chsep" style="left:100.50px"></div>
<div class="chsep" style="left:209.00px"></div>
<div class="chsep" style="left:402.50px"></div>
<div class="chsep" style="left:495.75px"></div>
<div class="chsep" style="left:810.75px"></div>
<div class="chsep" style="left:1212.00px"></div>
<div class="chsep" style="left:1272.50px"></div>
<div class="rn" style="top:220.80px">1</div>
<div class="rn" style="top:238.23px">2</div>
<div class="rn" style="top:255.66px">3</div>
<div class="rn" style="top:273.09px">4</div>
<div class="rn" style="top:290.52px">5</div>
<div class="rn" style="top:307.95px">6</div>
<div class="rn" style="top:325.38px">7</div>
<div class="rn" style="top:342.81px">8</div>
<div class="rn" style="top:360.24px">9</div>
<div class="rn" style="top:377.67px">10</div>
<div class="rn" style="top:395.10px">11</div>
<div class="rn" style="top:412.53px">12</div>
<div class="rn" style="top:429.96px">13</div>
<div class="rn" style="top:447.39px">14</div>
<div class="rn" style="top:464.82px">15</div>
<div class="rn" style="top:482.25px">16</div>
<div class="rn" style="top:499.68px">17</div>
<div class="cells"></div>
<div class="gv" style="left:1272px;top:500px;height:300px"></div>
<div class="gh" style="left:1273px;top:237px;width:10px"></div>
<div class="gh" style="left:1273px;top:255px;width:10px"></div>
<div class="gh" style="left:1273px;top:272px;width:10px"></div>
<div class="gh" style="left:1273px;top:290px;width:10px"></div>
<div class="gh" style="left:1273px;top:307px;width:10px"></div>
<div class="gh" style="left:1273px;top:325px;width:10px"></div>
<div class="gh" style="left:1273px;top:342px;width:10px"></div>
<div class="gh" style="left:1273px;top:359px;width:10px"></div>
<div class="gh" style="left:1273px;top:377px;width:10px"></div>
<div class="gh" style="left:1273px;top:394px;width:10px"></div>
<div class="gh" style="left:1273px;top:412px;width:10px"></div>
<div class="gh" style="left:1273px;top:429px;width:10px"></div>
<div class="gh" style="left:1273px;top:447px;width:10px"></div>
<div class="gh" style="left:1273px;top:464px;width:10px"></div>
<div class="gh" style="left:1273px;top:482px;width:10px"></div>
<div class="gh" style="left:1273px;top:499px;width:10px"></div>
<div class="gv" style="left:100px;top:500px;height:20px"></div>
<div class="gv" style="left:209px;top:500px;height:20px"></div>
<div class="gv" style="left:402px;top:500px;height:20px"></div>
<div class="gv" style="left:496px;top:500px;height:20px"></div>
<div class="gv" style="left:810px;top:500px;height:20px"></div>
<div class="gv" style="left:1212px;top:500px;height:20px"></div>
<div class="gv" style="left:1272px;top:500px;height:20px"></div>
<div class="ph" style="left:22.50px;top:221.10px;width:1250.50px;height:17.13px"></div>
<div class="hc" style="left:22.50px;top:220.80px;width:78.50px"><span class="cs" style="transform:scaleX(1.0202)">#</span></div>
<div class="hc" style="left:101.00px;top:220.80px;width:108.50px"><span class="cs" style="transform:scaleX(0.9691)">KPI Group</span></div>
<div class="hc" style="left:209.50px;top:220.80px;width:193.50px"><span class="cs" style="transform:scaleX(0.9953)">KPI Name</span></div>
<div class="hc" style="left:403.00px;top:220.80px;width:93.25px"><span class="cs" style="transform:scaleX(1.0292)">Unit</span></div>
<div class="hc" style="left:496.25px;top:220.80px;width:315.00px"><span class="cs" style="transform:scaleX(1.0142)">Formula</span></div>
<div class="hc" style="left:811.25px;top:220.80px;width:401.25px"><span class="cs" style="transform:scaleX(1.0151)">Definition</span></div>
<div class="hc" style="left:1212.50px;top:220.80px;width:60.50px"><span class="cs" style="transform:scaleX(0.9922)">Type</span></div>
<svg class="home" viewBox="0 0 16 16" width="16" height="16" style="left:23px;top:221.80px"><path d="M8 1.2 L0.6 8.2 L1.6 9.2 L8 3.2 L14.4 9.2 L15.4 8.2 L12.6 5.5 V2.4 H11 V4 Z" fill="#bfe3ff"/><path d="M2.6 9 L8 4.2 L13.4 9 V15 H2.6 Z" fill="#d9efff"/><rect x="4" y="10.6" width="2.6" height="2.8" fill="#7030a0"/><rect x="9.2" y="10.6" width="2.6" height="2.8" fill="#7030a0"/></svg>
<div class="c ca" style="left:22.50px;top:238.23px;width:78.50px"><span class="cs" style="transform:scaleX(0.9091)">1</span></div>
<div class="c" style="left:101.00px;top:238.23px;width:108.50px"><span class="cs" style="transform:scaleX(0.9828)">Incident Detection</span></div>
<div class="c" style="left:209.50px;top:238.23px;width:193.50px"><span class="cs" style="transform:scaleX(0.9299)">Mean Time to Detect (MTTD)</span></div>
<div class="c" style="left:403.00px;top:238.23px;width:93.25px"><span class="cs" style="transform:scaleX(0.9747)">Time (Hours)</span></div>
<div class="c" style="left:496.25px;top:238.23px;width:315.00px"><span class="cs" style="transform:scaleX(0.9755)">Total Time from Incident Occurrence to Detection</span></div>
<div class="c" style="left:811.25px;top:238.23px;width:401.25px"><span class="cs" style="transform:scaleX(0.9577)">Measures the average time it takes to detect a cyber incident after it occurs.</span></div>
<div class="c" style="left:1212.50px;top:238.23px;width:60.50px"><span class="cs" style="transform:scaleX(0.8740)">LTB</span></div>
<div class="c ca" style="left:22.50px;top:255.66px;width:78.50px"><span class="cs" style="transform:scaleX(0.9091)">2</span></div>
<div class="c" style="left:101.00px;top:255.66px;width:108.50px"><span class="cs" style="transform:scaleX(0.9828)">Incident Detection</span></div>
<div class="c" style="left:209.50px;top:255.66px;width:193.50px"><span class="cs" style="transform:scaleX(0.9629)">Number of Detected Incidents</span></div>
<div class="c" style="left:403.00px;top:255.66px;width:93.25px"><span class="cs" style="transform:scaleX(0.9788)">Count</span></div>
<div class="c" style="left:496.25px;top:255.66px;width:315.00px"><span class="cs" style="transform:scaleX(0.9609)">Count of Incidents Detected in a Time Period</span></div>
<div class="c" style="left:811.25px;top:255.66px;width:401.25px"><span class="cs" style="transform:scaleX(0.9746)">Tracks the total number of incidents detected within a given period.</span></div>
<div class="c" style="left:1212.50px;top:255.66px;width:60.50px"><span class="cs" style="transform:scaleX(0.8911)">UTB</span></div>
<div class="c ca" style="left:22.50px;top:273.09px;width:78.50px"><span class="cs" style="transform:scaleX(0.9091)">3</span></div>
<div class="c" style="left:101.00px;top:273.09px;width:108.50px"><span class="cs" style="transform:scaleX(0.9725)">Incident Response</span></div>
<div class="c" style="left:209.50px;top:273.09px;width:193.50px"><span class="cs" style="transform:scaleX(0.9284)">Mean Time to Respond (MTTR)</span></div>
<div class="c" style="left:403.00px;top:273.09px;width:93.25px"><span class="cs" style="transform:scaleX(0.9747)">Time (Hours)</span></div>
<div class="c" style="left:496.25px;top:273.09px;width:315.00px"><span class="cs" style="transform:scaleX(0.9692)">Total Time from Incident Detection to Response</span></div>
<div class="c" style="left:811.25px;top:273.09px;width:401.25px"><span class="cs" style="transform:scaleX(0.9652)">Measures the average time taken to respond to an incident after detection.</span></div>
<div class="c" style="left:1212.50px;top:273.09px;width:60.50px"><span class="cs" style="transform:scaleX(0.8740)">LTB</span></div>
<div class="c ca" style="left:22.50px;top:290.52px;width:78.50px"><span class="cs" style="transform:scaleX(0.9091)">4</span></div>
<div class="c" style="left:101.00px;top:290.52px;width:108.50px"><span class="cs" style="transform:scaleX(0.9725)">Incident Response</span></div>
<div class="c" style="left:209.50px;top:290.52px;width:193.50px"><span class="cs" style="transform:scaleX(0.9535)">Incident Response Rate</span></div>
<div class="c" style="left:403.00px;top:290.52px;width:93.25px"><span class="cs" style="transform:scaleX(0.9443)">Percentage</span></div>
<div class="c" style="left:496.25px;top:290.52px;width:315.00px"><span class="cs" style="transform:scaleX(0.9743)">(Incidents Resolved / Total Incidents) * 100</span></div>
<div class="c" style="left:811.25px;top:290.52px;width:401.25px"><span class="cs" style="transform:scaleX(0.9649)">Measures the percentage of incidents that are responded to and resolved.</span></div>
<div class="c" style="left:1212.50px;top:290.52px;width:60.50px"><span class="cs" style="transform:scaleX(0.8911)">UTB</span></div>
<div class="c ca" style="left:22.50px;top:307.95px;width:78.50px"><span class="cs" style="transform:scaleX(0.9091)">5</span></div>
<div class="c" style="left:101.00px;top:307.95px;width:108.50px"><span class="cs" style="transform:scaleX(0.9725)">Incident Response</span></div>
<div class="c" style="left:209.50px;top:307.95px;width:193.50px"><span class="cs" style="transform:scaleX(0.9748)">Number of Incidents Escalated</span></div>
<div class="c" style="left:403.00px;top:307.95px;width:93.25px"><span class="cs" style="transform:scaleX(0.9788)">Count</span></div>
<div class="c" style="left:496.25px;top:307.95px;width:315.00px"><span class="cs" style="transform:scaleX(0.9740)">Count of Incidents that Required Escalation</span></div>
<div class="c" style="left:811.25px;top:307.95px;width:401.25px"><span class="cs" style="transform:scaleX(0.9798)">Tracks how many incidents required escalation to a higher-level team.</span></div>
<div class="c" style="left:1212.50px;top:307.95px;width:60.50px"><span class="cs" style="transform:scaleX(0.8740)">LTB</span></div>
<div class="c ca" style="left:22.50px;top:325.38px;width:78.50px"><span class="cs" style="transform:scaleX(0.9091)">6</span></div>
<div class="c" style="left:101.00px;top:325.38px;width:108.50px"><span class="cs" style="transform:scaleX(0.9431)">Incident Recovery</span></div>
<div class="c" style="left:209.50px;top:325.38px;width:193.50px"><span class="cs" style="transform:scaleX(0.9170)">Mean Time to Recover (MTTR)</span></div>
<div class="c" style="left:403.00px;top:325.38px;width:93.25px"><span class="cs" style="transform:scaleX(0.9747)">Time (Hours)</span></div>
<div class="c" style="left:496.25px;top:325.38px;width:315.00px"><span class="cs" style="transform:scaleX(0.9643)">Total Time from Incident Detection to Full Recovery</span></div>
<div class="c" style="left:811.25px;top:325.38px;width:401.25px"><span class="cs" style="transform:scaleX(0.9634)">Measures the average time taken to fully resolve an incident after detection.</span></div>
<div class="c" style="left:1212.50px;top:325.38px;width:60.50px"><span class="cs" style="transform:scaleX(0.8740)">LTB</span></div>
<div class="c ca" style="left:22.50px;top:342.81px;width:78.50px"><span class="cs" style="transform:scaleX(0.9091)">7</span></div>
<div class="c" style="left:101.00px;top:342.81px;width:108.50px"><span class="cs" style="transform:scaleX(0.9431)">Incident Recovery</span></div>
<div class="c" style="left:209.50px;top:342.81px;width:193.50px"><span class="cs" style="transform:scaleX(0.9361)">Incident Recovery Rate</span></div>
<div class="c" style="left:403.00px;top:342.81px;width:93.25px"><span class="cs" style="transform:scaleX(0.9443)">Percentage</span></div>
<div class="c" style="left:496.25px;top:342.81px;width:315.00px"><span class="cs" style="transform:scaleX(0.9720)">(Incidents Fully Resolved / Total Incidents) * 100</span></div>
<div class="c" style="left:811.25px;top:342.81px;width:401.25px"><span class="cs" style="transform:scaleX(0.9629)">Measures the percentage of incidents that were fully resolved.</span></div>
<div class="c" style="left:1212.50px;top:342.81px;width:60.50px"><span class="cs" style="transform:scaleX(0.8911)">UTB</span></div>
<div class="c ca" style="left:22.50px;top:360.24px;width:78.50px"><span class="cs" style="transform:scaleX(0.9091)">8</span></div>
<div class="c" style="left:101.00px;top:360.24px;width:108.50px"><span class="cs" style="transform:scaleX(1.0154)">Incident Impact</span></div>
<div class="c" style="left:209.50px;top:360.24px;width:193.50px"><span class="cs" style="transform:scaleX(0.9791)">Number of High Impact Incidents</span></div>
<div class="c" style="left:403.00px;top:360.24px;width:93.25px"><span class="cs" style="transform:scaleX(0.9788)">Count</span></div>
<div class="c" style="left:496.25px;top:360.24px;width:315.00px"><span class="cs" style="transform:scaleX(0.9693)">Count of High Impact Incidents in a Time Period</span></div>
<div class="c" style="left:811.25px;top:360.24px;width:401.25px"><span class="cs" style="transform:scaleX(0.9865)">Tracks the number of incidents that had a significant impact on operations or data.</span></div>
<div class="c" style="left:1212.50px;top:360.24px;width:60.50px"><span class="cs" style="transform:scaleX(0.8740)">LTB</span></div>
<div class="c ca" style="left:22.50px;top:377.67px;width:78.50px"><span class="cs" style="transform:scaleX(0.9091)">9</span></div>
<div class="c" style="left:101.00px;top:377.67px;width:108.50px"><span class="cs" style="transform:scaleX(1.0154)">Incident Impact</span></div>
<div class="c" style="left:209.50px;top:377.67px;width:193.50px"><span class="cs" style="transform:scaleX(0.9738)">Cost per Incident</span></div>
<div class="c" style="left:403.00px;top:377.67px;width:93.25px"><span class="cs" style="transform:scaleX(0.9226)">Currency (USD)</span></div>
<div class="c" style="left:496.25px;top:377.67px;width:315.00px"><span class="cs" style="transform:scaleX(0.9804)">Total Costs Incurred / Number of Incidents</span></div>
<div class="c" style="left:811.25px;top:377.67px;width:401.25px"><span class="cs" style="transform:scaleX(0.9686)">Calculates the average cost incurred for each cyber incident.</span></div>
<div class="c" style="left:1212.50px;top:377.67px;width:60.50px"><span class="cs" style="transform:scaleX(0.8740)">LTB</span></div>
<div class="c ca" style="left:22.50px;top:395.10px;width:78.50px"><span class="cs" style="transform:scaleX(0.9104)">10</span></div>
<div class="c" style="left:101.00px;top:395.10px;width:108.50px"><span class="cs" style="transform:scaleX(0.9746)">Incident Prevention</span></div>
<div class="c" style="left:209.50px;top:395.10px;width:193.50px"><span class="cs" style="transform:scaleX(0.9630)">Number of Prevented Incidents</span></div>
<div class="c" style="left:403.00px;top:395.10px;width:93.25px"><span class="cs" style="transform:scaleX(0.9788)">Count</span></div>
<div class="c" style="left:496.25px;top:395.10px;width:315.00px"><span class="cs" style="transform:scaleX(0.9499)">Count of Incidents Prevented by Proactive Measures</span></div>
<div class="c" style="left:811.25px;top:395.10px;width:401.25px"><span class="cs" style="transform:scaleX(0.9660)">Measures how many incidents were prevented through proactive security measures.</span></div>
<div class="c" style="left:1212.50px;top:395.10px;width:60.50px"><span class="cs" style="transform:scaleX(0.8911)">UTB</span></div>
<div class="c ca" style="left:22.50px;top:412.53px;width:78.50px"><span class="cs" style="transform:scaleX(0.9756)">11</span></div>
<div class="c" style="left:101.00px;top:412.53px;width:108.50px"><span class="cs" style="transform:scaleX(0.9746)">Incident Prevention</span></div>
<div class="c" style="left:209.50px;top:412.53px;width:193.50px"><span class="cs" style="transform:scaleX(0.9380)">False Positive Rate</span></div>
<div class="c" style="left:403.00px;top:412.53px;width:93.25px"><span class="cs" style="transform:scaleX(0.9443)">Percentage</span></div>
<div class="c" style="left:496.25px;top:412.53px;width:315.00px"><span class="cs" style="transform:scaleX(0.9675)">(False Positives / Total Alerts) * 100</span></div>
<div class="c" style="left:811.25px;top:412.53px;width:401.25px"><span class="cs" style="transform:scaleX(0.9665)">Tracks the percentage of alerts that turned out to be false positives.</span></div>
<div class="c" style="left:1212.50px;top:412.53px;width:60.50px"><span class="cs" style="transform:scaleX(0.8740)">LTB</span></div>
<div class="c ca" style="left:22.50px;top:429.96px;width:78.50px"><span class="cs" style="transform:scaleX(0.9104)">12</span></div>
<div class="c" style="left:101.00px;top:429.96px;width:108.50px"><span class="cs" style="transform:scaleX(0.9746)">Incident Prevention</span></div>
<div class="c" style="left:209.50px;top:429.96px;width:193.50px"><span class="cs" style="transform:scaleX(0.9810)">Incident Detection Accuracy</span></div>
<div class="c" style="left:403.00px;top:429.96px;width:93.25px"><span class="cs" style="transform:scaleX(0.9443)">Percentage</span></div>
<div class="c" style="left:496.25px;top:429.96px;width:315.00px"><span class="cs" style="transform:scaleX(0.9706)">(True Positives / Total Alerts) * 100</span></div>
<div class="c" style="left:811.25px;top:429.96px;width:401.25px"><span class="cs" style="transform:scaleX(0.9750)">Measures the accuracy of incident detection, focusing on true positives.</span></div>
<div class="c" style="left:1212.50px;top:429.96px;width:60.50px"><span class="cs" style="transform:scaleX(0.8911)">UTB</span></div>
<div class="c ca" style="left:22.50px;top:447.39px;width:78.50px"><span class="cs" style="transform:scaleX(0.9104)">13</span></div>
<div class="c" style="left:101.00px;top:447.39px;width:108.50px"><span class="cs" style="transform:scaleX(0.9599)">Security Posture</span></div>
<div class="c" style="left:209.50px;top:447.39px;width:193.50px"><span class="cs" style="transform:scaleX(0.9552)">Security Awareness Training Rate</span></div>
<div class="c" style="left:403.00px;top:447.39px;width:93.25px"><span class="cs" style="transform:scaleX(0.9443)">Percentage</span></div>
<div class="c" style="left:496.25px;top:447.39px;width:315.00px"><span class="cs" style="transform:scaleX(0.9584)">(Employees Trained / Total Employees) * 100</span></div>
<div class="c" style="left:811.25px;top:447.39px;width:401.25px"><span class="cs" style="transform:scaleX(0.9629)">Measures the percentage of employees who have completed security awareness training.</span></div>
<div class="c" style="left:1212.50px;top:447.39px;width:60.50px"><span class="cs" style="transform:scaleX(0.8911)">UTB</span></div>
<div class="c ca" style="left:22.50px;top:464.82px;width:78.50px"><span class="cs" style="transform:scaleX(0.9104)">14</span></div>
<div class="c" style="left:101.00px;top:464.82px;width:108.50px"><span class="cs" style="transform:scaleX(0.9599)">Security Posture</span></div>
<div class="c" style="left:209.50px;top:464.82px;width:193.50px"><span class="cs" style="transform:scaleX(0.9377)">Security Control Coverage</span></div>
<div class="c" style="left:403.00px;top:464.82px;width:93.25px"><span class="cs" style="transform:scaleX(0.9443)">Percentage</span></div>
<div class="c" style="left:496.25px;top:464.82px;width:315.00px"><span class="cs" style="transform:scaleX(0.9688)">(Number of Security Controls Implemented / Total Controls) * 100</span></div>
<div class="c" style="left:811.25px;top:464.82px;width:401.25px"><span class="cs" style="transform:scaleX(0.9687)">Measures the percentage of implemented security controls across systems.</span></div>
<div class="c" style="left:1212.50px;top:464.82px;width:60.50px"><span class="cs" style="transform:scaleX(0.8911)">UTB</span></div>
<div class="c ca" style="left:22.50px;top:482.25px;width:78.50px"><span class="cs" style="transform:scaleX(0.9104)">15</span></div>
<div class="c" style="left:101.00px;top:482.25px;width:108.50px"><span class="cs" style="transform:scaleX(0.9599)">Security Posture</span></div>
<div class="c" style="left:209.50px;top:482.25px;width:193.50px"><span class="cs" style="transform:scaleX(0.9936)">Number of Vulnerabilities Found</span></div>
<div class="c" style="left:403.00px;top:482.25px;width:93.25px"><span class="cs" style="transform:scaleX(0.9788)">Count</span></div>
<div class="c" style="left:496.25px;top:482.25px;width:315.00px"><span class="cs" style="transform:scaleX(0.9685)">Count of Vulnerabilities Found in a Given Time Period</span></div>
<div class="c" style="left:811.25px;top:482.25px;width:401.25px"><span class="cs" style="transform:scaleX(0.9783)">Tracks the number of vulnerabilities discovered during security assessments.</span></div>
<div class="c" style="left:1212.50px;top:482.25px;width:60.50px"><span class="cs" style="transform:scaleX(0.8740)">LTB</span></div>
<div class="lh" style="top:237px"></div>
<div class="lh" style="top:255px"></div>
<div class="lh" style="top:272px"></div>
<div class="lh" style="top:290px"></div>
<div class="lh" style="top:307px"></div>
<div class="lh" style="top:325px"></div>
<div class="lh" style="top:342px"></div>
<div class="lh" style="top:359px"></div>
<div class="lh" style="top:377px"></div>
<div class="lh" style="top:394px"></div>
<div class="lh" style="top:412px"></div>
<div class="lh" style="top:429px"></div>
<div class="lh" style="top:447px"></div>
<div class="lh" style="top:464px"></div>
<div class="lh" style="top:482px"></div>
<div class="lh" style="top:499px"></div>
<div class="lv" style="left:22px"></div>
<div class="lv" style="left:100px"></div>
<div class="lv" style="left:209px"></div>
<div class="lv" style="left:402px"></div>
<div class="lv" style="left:496px"></div>
<div class="lv" style="left:810px"></div>
<div class="lv" style="left:1212px"></div>
<div class="lv" style="left:1272px"></div>
<div class="lvh" style="left:100px"></div>
<div class="lvh" style="left:209px"></div>
<div class="lvh" style="left:402px"></div>
<div class="lvh" style="left:496px"></div>
<div class="lvh" style="left:810px"></div>
<div class="lvh" style="left:1212px"></div>
</div>
</body></html>
